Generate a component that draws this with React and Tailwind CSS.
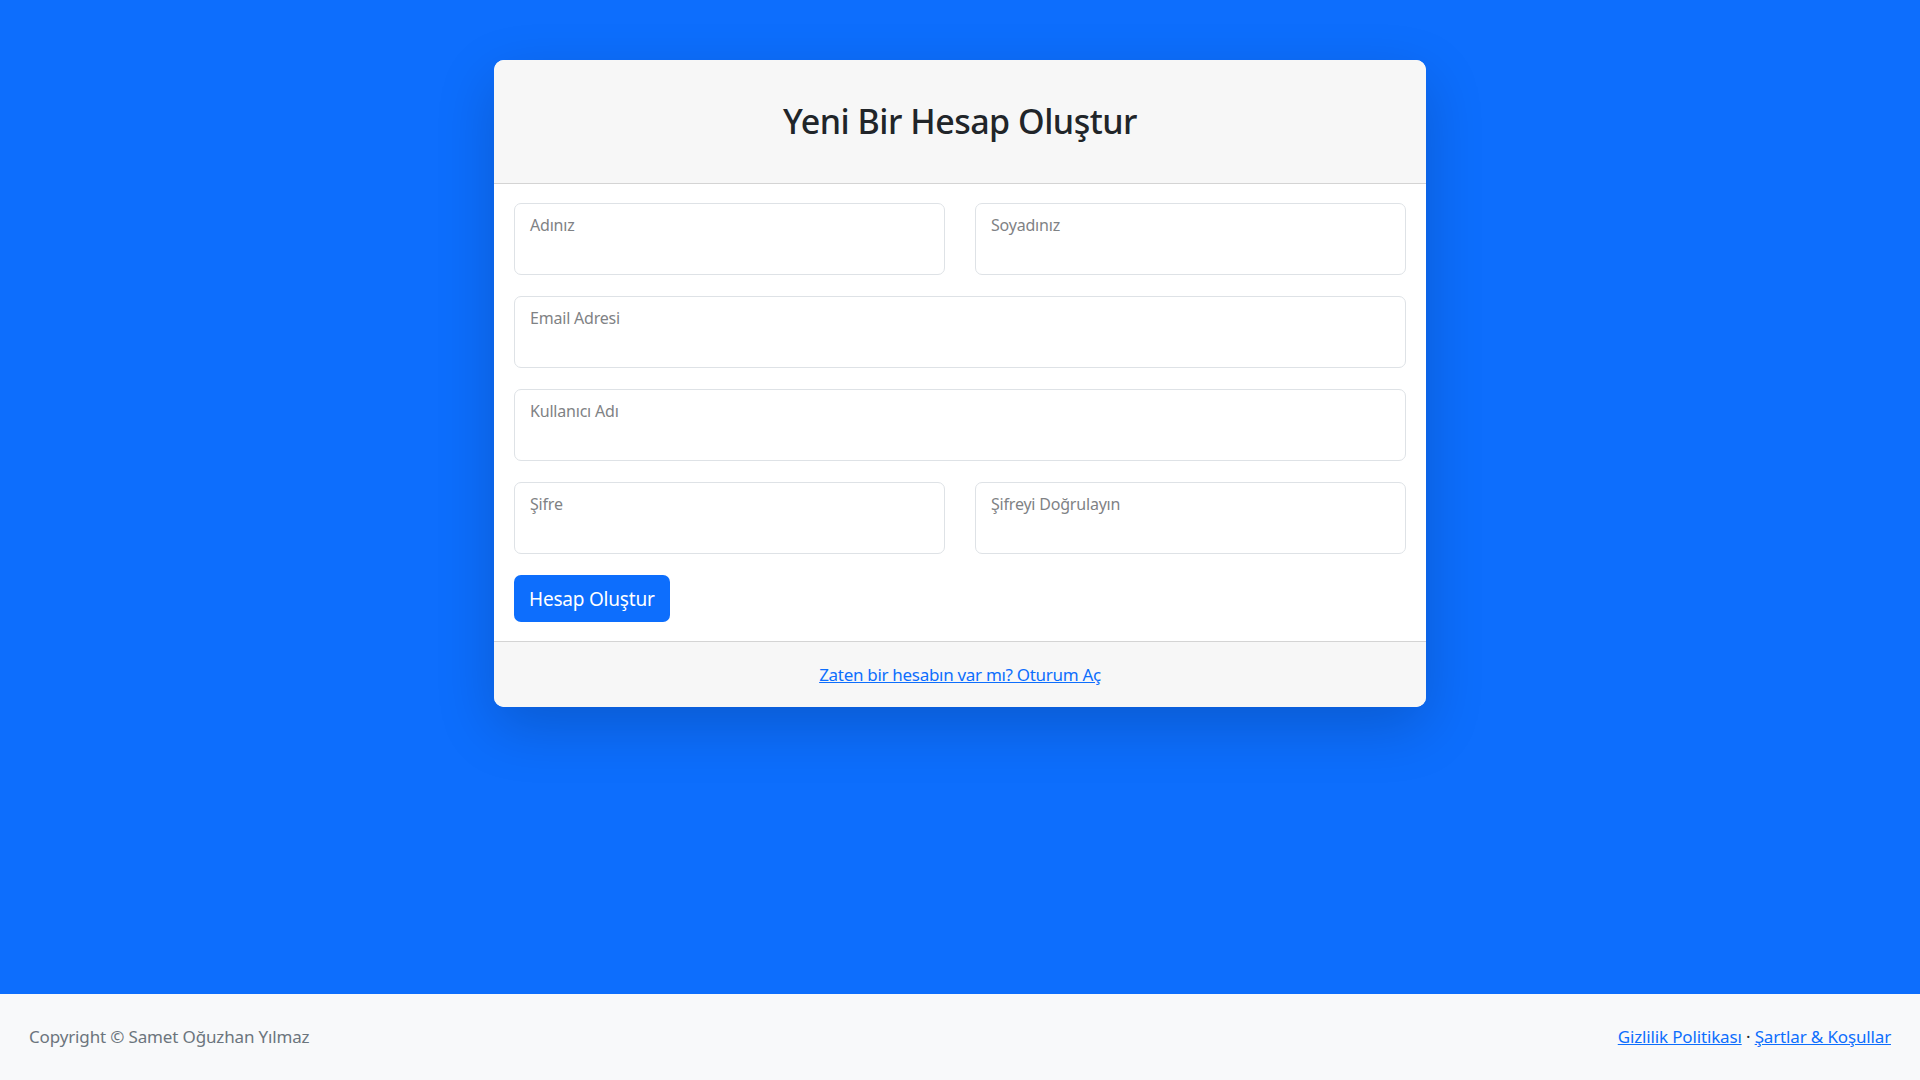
import React from 'react';

const Field = ({ label, type = 'text' }) => (
  <div className="relative">
    <input
      type={type}
      className="block w-full h-[72px] rounded-[7px] border border-[#dee2e6] bg-white px-[16px] pt-[32px] pb-[8px] text-[19px] text-[#212529] outline-none"
    />
    <label className="pointer-events-none absolute left-[16px] top-[10px] text-[16px] leading-[24px] text-[#7f8285] tracking-[-0.2px]">
      {label}
    </label>
  </div>
);

const App = () => {
  return (
    <div className="min-h-screen flex flex-col bg-[#0d6efd] font-['Noto_Sans',sans-serif]">
      <main className="flex-1">
        <div className="w-[932px] mx-auto mt-[60px] bg-white rounded-[10px] overflow-hidden shadow-[0_20px_59px_rgba(0,0,0,0.175)]">
          <div className="bg-[#f7f7f7] border-b border-[#d4d4d4] py-[12px]">
            <h3 className="my-[29px] text-center text-[34px] leading-[41px] font-medium text-[#212529] tracking-[-0.5px]">
              Yeni Bir Hesap Oluştur
            </h3>
          </div>

          <form className="px-[20px] pt-[19px] pb-[19px] flex flex-col gap-[21px]">
            <div className="grid grid-cols-2 gap-[30px]">
              <Field label="Adınız" />
              <Field label="Soyadınız" />
            </div>
            <Field label="Email Adresi" type="email" />
            <Field label="Kullanıcı Adı" />
            <div className="grid grid-cols-2 gap-[30px]">
              <Field label="Şifre" type="password" />
              <Field label="Şifreyi Doğrulayın" type="password" />
            </div>
            <div>
              <button
                type="button"
                className="h-[47px] px-[15px] rounded-[7px] bg-[#0d6efd] text-white text-[19px] leading-[24px] tracking-[-0.2px]"
              >
                Hesap Oluştur
              </button>
            </div>
          </form>

          <div className="bg-[#f7f7f7] border-t border-[#d4d4d4] h-[66px] flex items-center justify-center">
            <a href="#" className="text-[17px] text-[#0d6efd] underline tracking-[-0.3px]">
              Zaten bir hesabın var mı? Oturum Aç
            </a>
          </div>
        </div>
      </main>

      <footer className="h-[86px] bg-[#f8f9fa] px-[29px] flex items-center justify-between text-[17px] tracking-[-0.15px]">
        <div className="text-[#6c757d]">Copyright © Samet Oğuzhan Yılmaz</div>
        <div className="text-[#212529]">
          <a href="#" className="text-[#0d6efd] underline">Gizlilik Politikası</a>
          {' · '}
          <a href="#" className="text-[#0d6efd] underline">Şartlar &amp; Koşullar</a>
        </div>
      </footer>
    </div>
  );
};

export default App;
